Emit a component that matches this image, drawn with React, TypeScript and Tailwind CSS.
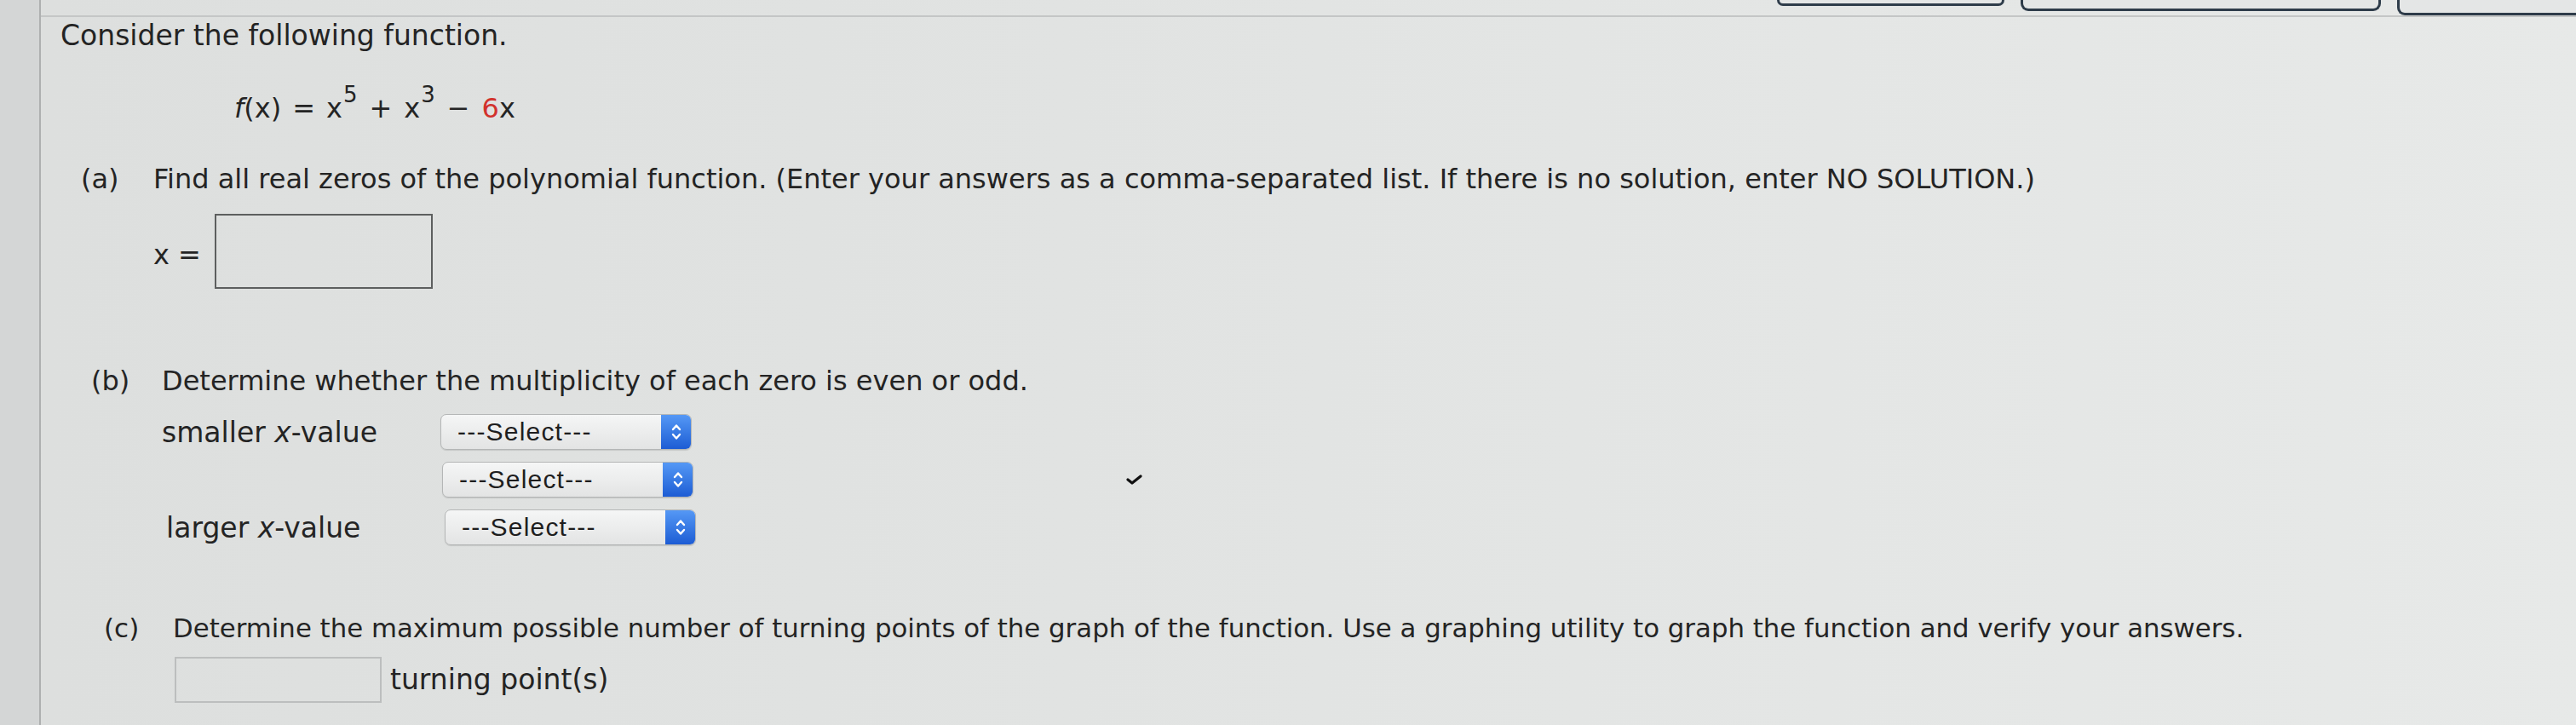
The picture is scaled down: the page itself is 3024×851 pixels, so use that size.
import React from "react";

function SelectBox() {
  return (
    <div className="flex h-[42px] w-[295px] shrink-0 items-stretch overflow-hidden rounded-[7px] border border-[#b4b6b6] bg-gradient-to-b from-[#f5f6f6] to-[#e3e4e4] shadow-[0_1px_1px_rgba(0,0,0,0.12)]">
      <span className="flex flex-1 items-center pl-[19px] font-['Liberation_Sans',Arial,sans-serif] text-[30px] leading-none tracking-[1.2px] text-[#1e1e1e]">
        ---Select---
      </span>
      <span className="flex w-[35px] items-center justify-center bg-gradient-to-b from-[#5598f5] to-[#1d5cd4]">
        <svg width="14" height="26" viewBox="0 0 14 26" fill="none">
          <path d="M3 10 L7 5.5 L11 10" stroke="white" strokeWidth="2.4" strokeLinecap="round" strokeLinejoin="round" />
          <path d="M3 16 L7 20.5 L11 16" stroke="white" strokeWidth="2.4" strokeLinecap="round" strokeLinejoin="round" />
        </svg>
      </span>
    </div>
  );
}

export default function App() {
  return (
    <div className="flex h-[851px] w-[3024px] overflow-hidden bg-[#dfe1e0] font-['DejaVu_Sans',Verdana,sans-serif] text-[#242424]">
      {/* left margin strip */}
      <div className="w-[46px] shrink-0 bg-[#d4d6d6]" />

      <div className="flex min-w-0 flex-1 flex-col border-l-2 border-[#aeb0b0] bg-gradient-to-r from-[#dddfde] to-[#e7e9e8]">
        {/* top nav buttons, cut off by the top edge */}
        <div className="flex h-[20px] shrink-0 items-start justify-end gap-[19px] border-b-2 border-[#c4c6c6]">
          <div className="h-[7px] w-[267px] rounded-b-[9px] border-x-[3px] border-b-[3px] border-[#2e3c4a] bg-[#e4e6e6]" />
          <div className="h-[13px] w-[423px] rounded-b-[9px] border-x-[3px] border-b-[3px] border-[#2e3c4a] bg-[#e4e6e6]" />
          <div className="h-[18px] w-[210px] rounded-bl-[9px] border-b-[3px] border-l-[3px] border-[#2e3c4a] bg-[#e4e6e6]" />
        </div>

        {/* question */}
        <p className="ml-[23px] mt-[5px] text-[33px] leading-none">Consider the following function.</p>

        <p className="ml-[227px] mt-[53px] text-[32px] leading-none">
          <i>f</i>(x)<span className="mx-[13px]">=</span>x
          <sup className="-top-[18px] ml-[1px] text-[26px]">5</sup>
          <span className="mx-[14px]">+</span>x
          <sup className="-top-[18px] ml-[1px] text-[26px]">3</sup>
          <span className="mx-[14px]">−</span>
          <span className="text-[#d2322d]">6</span>x
        </p>

        {/* part (a) */}
        <div className="ml-[47px] mt-[51px] flex">
          <span className="w-[85px] shrink-0 text-[32px] leading-none">(a)</span>
          <div className="flex flex-col">
            <p className="text-[32px] leading-none whitespace-nowrap">
              Find all real zeros of the polynomial function. (Enter your answers as a comma-separated list. If there
              is no solution, enter NO SOLUTION.)
            </p>
            <div className="mt-[25px] flex items-center">
              <span className="mt-[8px] text-[32px] leading-none">x =</span>
              <div className="ml-[16px] h-[88px] w-[256px] border-2 border-[#5d5f5f]" />
            </div>
          </div>
        </div>

        {/* part (b) */}
        <div className="ml-[59px] mt-[92px] flex">
          <span className="w-[83px] shrink-0 text-[32px] leading-none">(b)</span>
          <div className="flex flex-col">
            <p className="text-[32px] leading-none whitespace-nowrap">
              Determine whether the multiplicity of each zero is even or odd.
            </p>
            <div className="mt-[23px] flex flex-col gap-[14px]">
              <div className="flex h-[42px] items-center">
                <span className="w-[327px] shrink-0 text-[33px] leading-none">
                  smaller <i>x</i>-value
                </span>
                <SelectBox />
              </div>
              <div className="flex h-[42px] items-center pl-[2px]">
                <span className="w-[327px] shrink-0" />
                <SelectBox />
                <svg className="ml-[508px]" width="19" height="12" viewBox="0 0 19 12" fill="none">
                  <path d="M2 6 L7 10 L17 2" stroke="#111" strokeWidth="3.2" strokeLinecap="round" strokeLinejoin="round" />
                </svg>
              </div>
              <div className="flex h-[42px] items-center pl-[5px]">
                <span className="w-[327px] shrink-0 text-[33px] leading-none">
                  larger <i>x</i>-value
                </span>
                <SelectBox />
              </div>
            </div>
          </div>
        </div>

        {/* part (c) */}
        <div className="ml-[74px] mt-[82px] flex">
          <span className="w-[81px] shrink-0 text-[31px] leading-none">(c)</span>
          <div className="flex flex-col">
            <p className="text-[30.8px] leading-none whitespace-nowrap">
              Determine the maximum possible number of turning points of the graph of the function. Use a graphing
              utility to graph the function and verify your answers.
            </p>
            <div className="mt-[18px] flex items-center">
              <div className="ml-[2px] h-[54px] w-[243px] border-2 border-[#bcbebe]" />
              <span className="ml-[10px] text-[33px] leading-none">turning point(s)</span>
            </div>
          </div>
        </div>
      </div>
    </div>
  );
}
